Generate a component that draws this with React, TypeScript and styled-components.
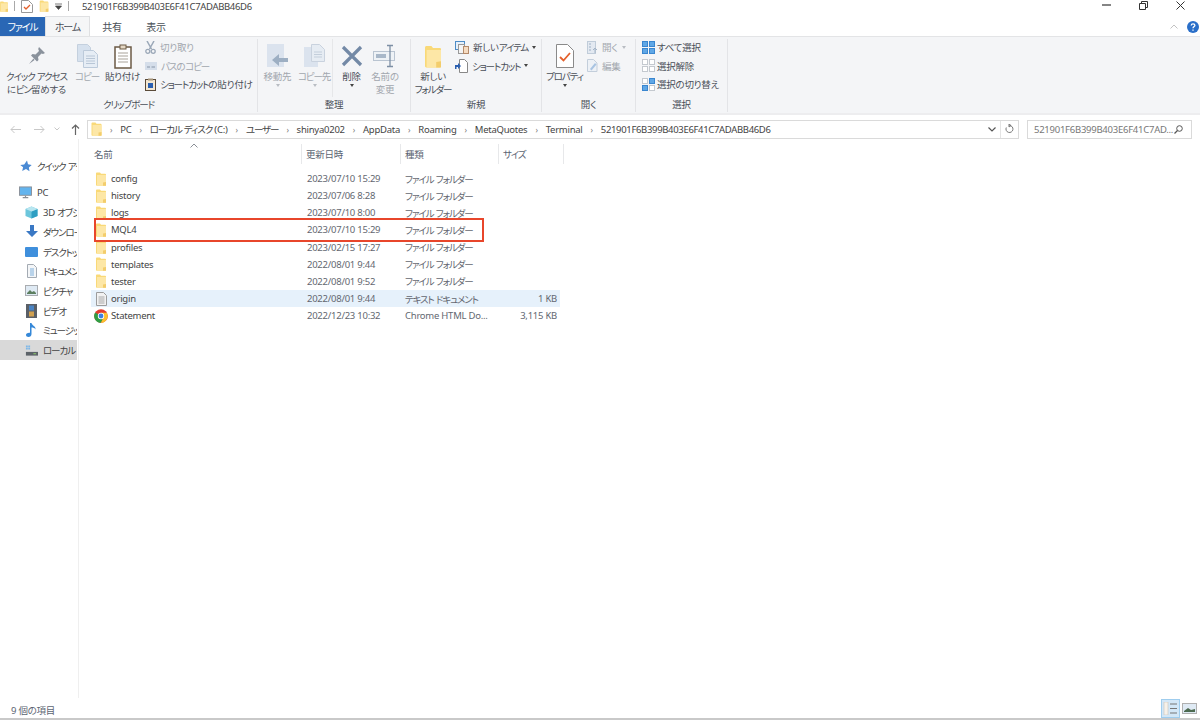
import type { ReactNode } from 'react';
import styled, { createGlobalStyle } from 'styled-components';

const GlobalStyle = createGlobalStyle`
  html, body {
    margin: 0;
    padding: 0;
    background: #fff;
  }
`;

const Window = styled.div`
  display: flex;
  flex-direction: column;
  position: relative;
  width: 1200px;
  height: 720px;
  overflow: hidden;
  background: #fff;
  color: #4a4f57;
  font-family: "Noto Sans", "Noto Sans CJK JP", sans-serif;
  font-size: 9.5px;
  font-feature-settings: "palt";
  letter-spacing: -0.25px;
`;

// katakana runs sit tighter than the rest of the text in this UI font
const KanaRun = styled.span`
  letter-spacing: -1.1px;
`;

function Jp({ children }: { children: string }) {
  const parts = children.split(/([ァ-ヶー]+)/);
  return (
    <>
      {parts.map((part, i) => (i % 2 === 1 ? <KanaRun key={i}>{part}</KanaRun> : part))}
    </>
  );
}

const TitleBar = styled.div`
  display: flex;
  align-items: center;
  height: 16px;
  flex: none;
`;

const TitleIcons = styled.div`
  display: flex;
  align-items: center;
  gap: 6px;
  width: 82px;
  flex: none;
  margin-top: -4px;
`;

const VBar = styled.span`
  width: 1px;
  height: 10px;
  background: #a9a9a9;
`;

const TitleText = styled.span`
  flex: 1;
  color: #454545;
  letter-spacing: -0.33px;
  margin-top: -4px;
`;

const WindowButtons = styled.div`
  display: flex;
  align-items: center;
  gap: 28px;
  padding-right: 15px;
  margin-top: -6px;
`;

const TabRow = styled.div`
  display: flex;
  align-items: flex-end;
  height: 20px;
  flex: none;
`;

const Tab = styled.div<{ $kind?: 'file' | 'active' }>`
  display: flex;
  align-items: center;
  justify-content: center;
  height: ${(p) => (p.$kind === 'active' ? '20px' : '19px')};
  width: ${(p) => (p.$kind ? '45px' : '44px')};
  background: ${(p) => (p.$kind === 'file' ? '#2a67b5' : p.$kind === 'active' ? '#f5f6f7' : 'transparent')};
  color: ${(p) => (p.$kind === 'file' ? '#fff' : '#4a4f57')};
  border: ${(p) => (p.$kind === 'active' ? '1px solid #dfe0e2' : 'none')};
  border-bottom: none;
  box-sizing: border-box;
  font-size: 10px;
`;

const TabRight = styled.div`
  display: flex;
  align-items: center;
  gap: 9px;
  margin-left: auto;
  padding-right: 1px;
  height: 19px;
`;

const Ribbon = styled.div`
  display: flex;
  height: 79px;
  flex: none;
  background: #f4f5f7;
  border-top: 1px solid #e3e4e6;
  border-bottom: 2px solid #ededef;
  box-sizing: border-box;
`;

const Group = styled.div<{ $w: number }>`
  display: flex;
  flex-direction: column;
  width: ${(p) => p.$w}px;
  flex: none;
  border-right: 1px solid #e3e4e7;
  margin: 2px 0 1px;
  box-sizing: border-box;
`;

const GroupBody = styled.div`
  display: flex;
  flex: 1;
  align-items: flex-start;
`;

const GroupLabel = styled.div`
  height: 14px;
  text-align: center;
  line-height: 14px;
`;

const BigButton = styled.div<{ $w: number; $off?: boolean; $divided?: boolean }>`
  display: flex;
  flex-direction: column;
  align-items: center;
  width: ${(p) => p.$w}px;
  flex: none;
  padding-top: 4px;
  line-height: 12.5px;
  text-align: center;
  color: ${(p) => (p.$off ? '#a2a7ae' : '#4a4f57')};
  white-space: nowrap;
  box-sizing: border-box;
  height: 58px;
  border-right: ${(p) => (p.$divided ? '1px solid #e6e7e9' : 'none')};
`;

const BigIcon = styled.div`
  display: flex;
  align-items: center;
  justify-content: center;
  height: 26px;
  margin-bottom: 2px;
`;

const Drop = styled.span<{ $off?: boolean }>`
  width: 0;
  height: 0;
  border-left: 2.5px solid transparent;
  border-right: 2.5px solid transparent;
  border-top: 3px solid ${(p) => (p.$off ? '#b9bdc3' : '#444')};
`;

const SmallColumn = styled.div<{ $left?: number }>`
  display: flex;
  flex-direction: column;
  margin-top: -1px;
  padding-left: ${(p) => p.$left ?? 0}px;
  flex: none;
`;

const SmallButton = styled.div<{ $off?: boolean }>`
  display: flex;
  align-items: center;
  gap: 4px;
  height: 18.5px;
  color: ${(p) => (p.$off ? '#a2a7ae' : '#4a4f57')};
  white-space: nowrap;
`;

const AddressRow = styled.div`
  display: flex;
  align-items: center;
  height: 20px;
  flex: none;
  margin-top: 4px;
  padding-left: 3px;
`;

const NavButton = styled.div<{ $w: number }>`
  display: flex;
  align-items: center;
  justify-content: center;
  width: ${(p) => p.$w}px;
  flex: none;
`;

const AddressBox = styled.div`
  display: flex;
  align-items: center;
  width: 932px;
  height: 19px;
  border: 1px solid #dadada;
  box-sizing: border-box;
  flex: none;
`;

const Crumbs = styled.div`
  display: flex;
  align-items: center;
  flex: 1;
  padding-left: 3px;
  gap: 8px;
  color: #444;
  white-space: nowrap;
`;

const CrumbLabel = styled.span`
  &:last-child {
    letter-spacing: -0.33px;
  }
`;

const Chevron = styled.span`
  color: #777;
  font-size: 8px;
`;

const DropChevron = styled.svg`
  margin-right: 4px;
`;

const AddressEnd = styled.div`
  display: flex;
  align-items: center;
  justify-content: center;
  width: 17px;
  height: 100%;
  border-left: 1px solid #e4e4e4;
`;

const SearchBox = styled.div`
  display: flex;
  align-items: center;
  justify-content: space-between;
  width: 165px;
  height: 19px;
  margin-left: 8px;
  padding: 0 8px 0 6px;
  border: 1px solid #dadada;
  box-sizing: border-box;
  color: #777;
  flex: none;
`;

const Main = styled.div`
  display: flex;
  flex: 1;
  min-height: 0;
`;

const Sidebar = styled.div`
  width: 79px;
  flex: none;
  padding-top: 17px;
  border-right: 1px solid #efefef;
  box-sizing: border-box;
  overflow: hidden;
`;

const SideItem = styled.div<{ $depth?: boolean; $selected?: boolean; $gapBelow?: number }>`
  display: flex;
  align-items: center;
  gap: 5px;
  height: 19.7px;
  width: 77px;
  padding-left: ${(p) => (p.$depth ? '25px' : '19px')};
  margin-bottom: ${(p) => p.$gapBelow ?? 0}px;
  box-sizing: border-box;
  background: ${(p) => (p.$selected ? '#d9d9d9' : 'transparent')};
  color: #444;
  white-space: nowrap;
  overflow: hidden;
`;

const SideIcon = styled.span`
  display: flex;
  flex: none;
  justify-content: center;
  width: 13px;
`;

const SideLabel = styled.span`
  white-space: nowrap;
`;

const ListPane = styled.div`
  flex: 1;
  padding-left: 12px;
  min-width: 0;
`;

const HeaderRow = styled.div`
  display: flex;
  position: relative;
  align-items: center;
  height: 20px;
  margin-top: 5px;
  margin-bottom: 6px;
  color: #5b6472;
`;

const SortCaret = styled.svg`
  position: absolute;
  left: 99px;
  top: -1px;
`;

const HeaderCell = styled.div<{ $w: number }>`
  width: ${(p) => p.$w}px;
  flex: none;
  height: 100%;
  display: flex;
  align-items: center;
  padding-left: 4px;
  box-sizing: border-box;
  border-right: 1px solid #e7e8ea;

  &:first-of-type {
    padding-left: 3px;
  }
`;

const FileRows = styled.div`
  display: flex;
  flex-direction: column;
  width: 469px;
`;

const FileRow = styled.div<{ $hover?: boolean }>`
  display: flex;
  align-items: center;
  height: 17.15px;
  background: ${(p) => (p.$hover ? '#e6f1fb' : 'transparent')};
  white-space: nowrap;
`;

const NameCell = styled.div`
  display: flex;
  align-items: center;
  gap: 3px;
  width: 216px;
  flex: none;
  padding-left: 3px;
  box-sizing: border-box;
  color: #444;
`;

const FileIcon = styled.span`
  display: flex;
  justify-content: center;
  width: 14px;
  flex: none;
`;

const DateCell = styled.div`
  width: 98px;
  flex: none;
  color: #636770;
`;

const TypeCell = styled.div`
  width: 97px;
  flex: none;
  color: #636770;
`;

const SizeCell = styled.div`
  flex: 1;
  text-align: right;
  padding-right: 3px;
  color: #636770;
`;

const Highlight = styled.div`
  position: absolute;
  left: 94px;
  top: 218px;
  width: 390px;
  height: 24px;
  border: 2.5px solid #e8462b;
  box-sizing: border-box;
  pointer-events: none;
`;

const StatusBar = styled.div`
  display: flex;
  align-items: center;
  justify-content: space-between;
  height: 20px;
  flex: none;
  padding: 0 3px 0 11px;
  border-bottom: 2px solid #c9c9c9;
  color: #5b6472;
`;

const StatusText = styled.span`
  padding-top: 3px;
`;

const ViewToggle = styled.div`
  display: flex;
  align-items: center;
  gap: 1px;
  height: 100%;
`;

const ViewButton = styled.div<{ $on?: boolean }>`
  display: flex;
  align-items: center;
  justify-content: center;
  width: ${(p) => (p.$on ? '19px' : '16px')};
  height: 19px;
  box-sizing: border-box;
  background: ${(p) => (p.$on ? '#d3e7f7' : 'transparent')};
  border: ${(p) => (p.$on ? '1px solid #9fcdee' : 'none')};
`;

const GridSvg = styled.svg`
  margin-right: -2px;
`;

function Folder({ w = 10, h = 14 }: { w?: number; h?: number }) {
  return (
    <svg width={w} height={h} viewBox="0 0 10 14">
      <path d="M0 1.500C0 .8.4.5 1 .5h3l1 1.200h4.200c.5 0 .8.300.8.800V13c0 .5-.3.800-.8.800H.8C.3 13.800 0 13.500 0 13z" fill="#f9d978" />
      <path d="M1 3h9v10c0 .5-.3.800-.8.800H1z" fill="#fde7a6" />
      <path d="M7 10.500 10 10v3.800H7z" fill="#f3cd6c" />
    </svg>
  );
}

function DocIcon() {
  return (
    <svg width="11" height="14" viewBox="0 0 11 14">
      <path d="M.5.500h7l3 3v10H.5z" fill="#f2f2f2" stroke="#9c9c9c" />
      <path d="M2.500 5h6M2.500 7h6M2.500 9h6M2.500 11h6" stroke="#a8a8a8" />
    </svg>
  );
}

function ChromeIcon() {
  return (
    <svg width="14" height="14" viewBox="0 0 14 14">
      <circle cx="7" cy="7" r="6.800" fill="#e33b2e" />
      <path d="M7 7 1.100 3.600A6.800 6.800 0 0 0 7 13.800L10 7z" fill="#2f9e44" />
      <path d="M7 3.800h5.900A6.800 6.800 0 0 1 7 13.800L10 7z" fill="#fbc02d" />
      <circle cx="7" cy="7" r="3.200" fill="#fff" />
      <circle cx="7" cy="7" r="2.400" fill="#3d7fe0" />
    </svg>
  );
}

function PinIcon() {
  return (
    <svg width="18" height="20" viewBox="0 0 18 20">
      <path d="M11 1l6 6-2 1-1.500-.5L10 11l.5 3-1.500 1.500-6-6L4.500 8l3 .5L11 5l-.8-2z" fill="#8a929c" />
      <path d="M5.500 12.500 1 18l5.500-4z" fill="#8a929c" />
    </svg>
  );
}

function CopyIcon() {
  return (
    <svg width="21" height="24" viewBox="0 0 21 24">
      <path d="M.5.500h10l3 3v14H.5z" fill="#d6e1ee" stroke="#c4d0de" />
      <path d="M6.500 6.500h10l4 4v13h-14z" fill="#e6edf5" stroke="#bccada" />
      <path d="M9 12h9M9 14.500h9M9 17h9M9 19.500h9" stroke="#b8c6d6" />
    </svg>
  );
}

function PasteIcon() {
  return (
    <svg width="18" height="25" viewBox="0 0 18 25">
      <rect x="1" y="3" width="16" height="21" fill="#fff" stroke="#6b5a45" strokeWidth="1.500" />
      <rect x="6" y="1" width="6" height="4" fill="#e4d7c4" stroke="#6b5a45" />
      <path d="M4 9h10M4 12h10M4 15h10M4 18h10" stroke="#a9a39a" />
    </svg>
  );
}

function ScissorsIcon() {
  return (
    <svg width="11" height="13" viewBox="0 0 11 13">
      <path d="M2 0l4.500 8M9 0 4.500 8" stroke="#9ba8b8" strokeWidth="1.500" fill="none" />
      <circle cx="2.800" cy="10.300" r="2" fill="none" stroke="#9ba8b8" strokeWidth="1.300" />
      <circle cx="8.200" cy="10.300" r="2" fill="none" stroke="#9ba8b8" strokeWidth="1.300" />
    </svg>
  );
}

function PathIcon() {
  return (
    <svg width="12" height="8" viewBox="0 0 12 8">
      <rect width="12" height="8" fill="#d5deea" />
      <path d="M2 5h3M6.500 5h3.500" stroke="#8896a8" />
    </svg>
  );
}

function ShortcutPasteIcon() {
  return (
    <svg width="11" height="13" viewBox="0 0 11 13">
      <rect x=".500" y="1.500" width="10" height="11" fill="#f3e7d2" stroke="#5a4a38" />
      <rect x="3" y=".500" width="5" height="2" fill="#a69478" />
      <rect x="3" y="5" width="5" height="5" fill="#2a5fb0" />
    </svg>
  );
}

function MoveIcon({ copy }: { copy?: boolean }) {
  return (
    <svg width="22" height="24" viewBox="0 0 22 24">
      {copy ? (
        <>
          <rect y="3" width="14" height="20" fill="#dbe3ee" />
          <path d="M7.500.500h8l5 5v12h-13z" fill="#e6ecf3" stroke="#c9d2de" />
          <path d="M10 8h8M10 10.500h8M10 13h8" stroke="#c3cedb" />
        </>
      ) : (
        <>
          <rect width="17" height="23" fill="#dbe3ee" />
          <path d="M21 14h-9v-4l-7 6 7 6v-4h9z" fill="#9dafc3" />
        </>
      )}
    </svg>
  );
}

function DeleteIcon() {
  return (
    <svg width="22" height="22" viewBox="0 0 22 22">
      <path d="M2 2l18 18M20 2 2 20" stroke="#7389a6" strokeWidth="3.200" />
    </svg>
  );
}

function RenameIcon() {
  return (
    <svg width="24" height="24" viewBox="0 0 24 24">
      <rect x=".500" y="7.500" width="21" height="9" fill="#eef2f6" stroke="#b9c4d1" />
      <rect x="3" y="10" width="10" height="4" fill="#a9b8c9" />
      <path d="M14 1.500h6M14 22.500h6M17 1.500v21" stroke="#7d8fa5" strokeWidth="1.300" fill="none" />
    </svg>
  );
}

function NewItemIcon() {
  return (
    <svg width="14" height="13" viewBox="0 0 14 13">
      <rect x=".500" y=".500" width="9" height="8" fill="#e6f0fa" stroke="#4d8cc7" />
      <rect x="3.500" y="3.500" width="6" height="9" fill="#f4f4f4" stroke="#999" />
      <rect x="8.500" y="5.500" width="5" height="7" fill="#f6dcc2" stroke="#b48a6a" />
    </svg>
  );
}

function ShortcutIcon() {
  return (
    <svg width="13" height="14" viewBox="0 0 13 14">
      <path d="M4.500.500h5l3 3v10h-8z" fill="#fff" stroke="#888" />
      <path d="M0 6h3V4l3 3-3 3V8H1.500v2H0z" fill="#2a5fb0" />
    </svg>
  );
}

function PropertiesIcon() {
  return (
    <svg width="18" height="24" viewBox="0 0 18 24">
      <path d="M.500.500h11l6 6v17H.500z" fill="#fff" stroke="#8a8a8a" />
      <path d="M4 13l3.500 3.500L14 9" fill="none" stroke="#e4602c" strokeWidth="1.800" />
    </svg>
  );
}

function OpenIcon() {
  return (
    <svg width="11" height="13" viewBox="0 0 11 13">
      <rect x=".500" y=".500" width="8" height="12" fill="#e3e9f1" stroke="#c0ccd9" />
      <path d="M2 3h2M2 6h2M2 9h2" stroke="#9db0c5" />
      <path d="M8 12V7M6 9l2-2 2 2" fill="none" stroke="#a5b5c8" />
    </svg>
  );
}

function EditIcon() {
  return (
    <svg width="11" height="13" viewBox="0 0 11 13">
      <path d="M.500.500h6l3.500 3.500v8.500H.500z" fill="#edf1f6" stroke="#c3cedb" />
      <path d="M3 10l5-6 1.500 1.500-5 6z" fill="#a9c4e2" />
    </svg>
  );
}

function SelectGrid({ mode }: { mode: 'all' | 'none' | 'invert' }) {
  const on = (i: number) => mode === 'all' || (mode === 'invert' && (i === 1 || i === 2));
  return (
    <GridSvg width="13" height="13" viewBox="0 0 13 13">
      {[0, 1, 2, 3].map((i) => (
        <rect
          key={i}
          x={(i % 2) * 7 + 0.5}
          y={Math.floor(i / 2) * 7 + 0.5}
          width="5"
          height="5"
          fill={on(i) ? '#5fa7e6' : '#fff'}
          stroke={on(i) ? '#3a86cf' : '#c4c9cf'}
        />
      ))}
    </GridSvg>
  );
}

function StarIcon() {
  return (
    <svg width="12" height="12" viewBox="0 0 12 12">
      <path d="M7 .5l1 3.800 3.700.6-2.800 2.500.6 3.900L6 9l-3.800 2 .9-3.700L.3 4.900l3.900-.3z" fill="#4a8ad4" />
    </svg>
  );
}

function PcIcon() {
  return (
    <svg width="14" height="13" viewBox="0 0 14 13">
      <rect x=".500" y=".500" width="13" height="9" fill="#63b4ee" stroke="#8a8f96" />
      <path d="M4 12h6M7 10v2" stroke="#8a8f96" strokeWidth="1.300" />
    </svg>
  );
}

function CubeIcon() {
  return (
    <svg width="13" height="13" viewBox="0 0 13 13">
      <path d="M6.500.500 12.500 3v7l-6 2.500-6-2.500V3z" fill="#6cc6dc" />
      <path d="M6.500 5.500 12.500 3v7l-6 2.500z" fill="#2e9ec2" />
      <path d="M6.500.500 12.500 3l-6 2.500L.5 3z" fill="#b8e6f0" />
    </svg>
  );
}

function DownloadIcon() {
  return (
    <svg width="12" height="13" viewBox="0 0 12 13">
      <path d="M4 0h4v6h4l-6 6-6-6h4z" fill="#3a78c4" />
    </svg>
  );
}

function DesktopIcon() {
  return (
    <svg width="13" height="10" viewBox="0 0 13 10">
      <rect width="13" height="10" rx="1" fill="#3f8fdc" />
    </svg>
  );
}

function DocumentsIcon() {
  return (
    <svg width="10" height="14" viewBox="0 0 10 14">
      <path d="M.500.500h6l3 3v10h-9z" fill="#f4f6f8" stroke="#a4abb3" />
      <path d="M3 5h4M3 7h4M3 9h4M3 11h4" stroke="#7fb0dc" />
    </svg>
  );
}

function PictureIcon() {
  return (
    <svg width="13" height="11" viewBox="0 0 13 11">
      <rect x=".500" y=".500" width="12" height="10" fill="#dfeaf4" stroke="#a9acb0" />
      <path d="M2 8l3-3 2 2 2-1 2 2v1H2z" fill="#5d7f60" />
    </svg>
  );
}

function VideoIcon() {
  return (
    <svg width="11" height="14" viewBox="0 0 11 14">
      <rect width="11" height="14" fill="#5a5f66" />
      <rect x="3" y="1.500" width="5" height="5" fill="#4a84c4" />
      <rect x="3" y="7.500" width="5" height="5" fill="#d0a050" />
    </svg>
  );
}

function MusicIcon() {
  return (
    <svg width="11" height="14" viewBox="0 0 11 14">
      <path d="M4 0h1.500c.3 2.500 4.500 3 4 6.500C9 5 7 4.500 5.500 4.500V11c0 1.700-1.300 3-3 3C1 14 0 13.200 0 12c0-1.400 1.400-2.400 4-2.200z" fill="#3588d8" />
    </svg>
  );
}

function DriveIcon() {
  return (
    <svg width="14" height="13" viewBox="0 0 14 13">
      <path d="M1 1h2v2H1zM3.500 1h2v2h-2zM1 3.500h2v2H1zM3.500 3.500h2v2h-2z" fill="#7db7e8" />
      <rect x="1" y="8" width="13" height="4" fill="#5c6268" />
      <rect x="9" y="9.500" width="3" height="1" fill="#8fd06a" />
    </svg>
  );
}

function ListViewIcon() {
  return (
    <svg width="15" height="13" viewBox="0 0 15 13">
      <rect x="1" y="0" width="4" height="13" fill="#f6f1ea" stroke="#c9c2b8" strokeWidth=".6" />
      <path d="M7 2h7M7 6.500h7M7 11h7" stroke="#777" strokeWidth="1.200" />
    </svg>
  );
}

function ThumbViewIcon() {
  return (
    <svg width="15" height="11" viewBox="0 0 15 11">
      <rect x=".500" y=".500" width="14" height="10" fill="#dfeaf4" stroke="#b0b0b0" />
      <path d="M2 8l4-3 3 2 4-1v3H2z" fill="#4c6a50" />
    </svg>
  );
}

const fileIcons: Record<string, ReactNode> = {
  folder: <Folder />,
  doc: <DocIcon />,
  chrome: <ChromeIcon />,
};

const items = [
  { name: 'config', date: '2023/07/10 15:29', type: 'ファイル フォルダー', icon: 'folder' },
  { name: 'history', date: '2023/07/06 8:28', type: 'ファイル フォルダー', icon: 'folder' },
  { name: 'logs', date: '2023/07/10 8:00', type: 'ファイル フォルダー', icon: 'folder' },
  { name: 'MQL4', date: '2023/07/10 15:29', type: 'ファイル フォルダー', icon: 'folder' },
  { name: 'profiles', date: '2023/02/15 17:27', type: 'ファイル フォルダー', icon: 'folder' },
  { name: 'templates', date: '2022/08/01 9:44', type: 'ファイル フォルダー', icon: 'folder' },
  { name: 'tester', date: '2022/08/01 9:52', type: 'ファイル フォルダー', icon: 'folder' },
  { name: 'origin', date: '2022/08/01 9:44', type: 'テキスト ドキュメント', size: '1 KB', icon: 'doc' },
  { name: 'Statement', date: '2022/12/23 10:32', type: 'Chrome HTML Do...', size: '3,115 KB', icon: 'chrome' },
];

const crumbs = ['PC', 'ローカル ディスク (C:)', 'ユーザー', 'shinya0202', 'AppData', 'Roaming', 'MetaQuotes', 'Terminal', '521901F6B399B403E6F41C7ADABB46D6'];

const places = [
  { label: '3D オブジェクト', icon: <CubeIcon /> },
  { label: 'ダウンロード', icon: <DownloadIcon /> },
  { label: 'デスクトップ', icon: <DesktopIcon /> },
  { label: 'ドキュメント', icon: <DocumentsIcon /> },
  { label: 'ピクチャ', icon: <PictureIcon /> },
  { label: 'ビデオ', icon: <VideoIcon /> },
  { label: 'ミュージック', icon: <MusicIcon /> },
];

function Crumb({ label, last }: { label: string; last: boolean }) {
  return (
    <>
      <CrumbLabel><Jp>{label}</Jp></CrumbLabel>
      {!last && <Chevron>›</Chevron>}
    </>
  );
}

export default function App() {
  return (
    <Window>
      <GlobalStyle />
      <TitleBar>
        <TitleIcons>
          <Folder w={8} h={11} />
          <VBar />
          <svg width="12" height="13" viewBox="0 0 12 13">
            <path d="M.500.500h7l4 4v8h-11z" fill="#fff" stroke="#999" />
            <path d="M3 7l2 2 4-4" fill="none" stroke="#e4602c" strokeWidth="1.300" />
          </svg>
          <Folder w={10} h={12} />
          <svg width="7" height="7" viewBox="0 0 7 7">
            <path d="M0 1h7M.5 3h6L3.500 6.500z" fill="#444" stroke="#444" strokeWidth=".7" />
          </svg>
          <VBar />
        </TitleIcons>
        <TitleText>521901F6B399B403E6F41C7ADABB46D6</TitleText>
        <WindowButtons>
          <svg width="9" height="2" viewBox="0 0 9 2"><path d="M0 1h9" stroke="#333" strokeWidth="1.200" /></svg>
          <svg width="9" height="9" viewBox="0 0 9 9"><path d="M.5 2.500h6v6h-6zM2.500 2.500v-2h6v6h-2" fill="none" stroke="#333" /></svg>
          <svg width="9" height="9" viewBox="0 0 9 9"><path d="M.5.5l8 8M8.500.5l-8 8" stroke="#333" /></svg>
        </WindowButtons>
      </TitleBar>
      <TabRow>
        <Tab $kind="file"><Jp>ファイル</Jp></Tab>
        <Tab $kind="active"><Jp>ホーム</Jp></Tab>
        <Tab>共有</Tab>
        <Tab>表示</Tab>
        <TabRight>
          <svg width="8" height="5" viewBox="0 0 8 5"><path d="M.5 4.500 4 1l3.500 3.500" fill="none" stroke="#c2c2c2" /></svg>
          <svg width="12" height="12" viewBox="0 0 12 12">
            <circle cx="6" cy="6" r="6" fill="#2a6fc9" />
            <path d="M4.200 4.500C4.300 3.400 5 2.800 6 2.800s1.900.6 1.900 1.600S6 5.800 6 7.200M6 8.500v1.200" fill="none" stroke="#fff" strokeWidth="1.300" />
          </svg>
        </TabRight>
      </TabRow>
      <Ribbon>
        <Group $w={258}>
          <GroupBody>
            <BigButton $w={73}><BigIcon><PinIcon /></BigIcon><span><Jp>クイック アクセス</Jp></span><span><Jp>にピン留めする</Jp></span></BigButton>
            <BigButton $w={28} $off><BigIcon><CopyIcon /></BigIcon><span><Jp>コピー</Jp></span></BigButton>
            <BigButton $w={43}><BigIcon><PasteIcon /></BigIcon>貼り付け</BigButton>
            <SmallColumn $left={1}>
              <SmallButton $off><ScissorsIcon />切り取り</SmallButton>
              <SmallButton $off><PathIcon /><span><Jp>パスのコピー</Jp></span></SmallButton>
              <SmallButton><ShortcutPasteIcon /><span><Jp>ショートカットの貼り付け</Jp></span></SmallButton>
            </SmallColumn>
          </GroupBody>
          <GroupLabel><Jp>クリップボード</Jp></GroupLabel>
        </Group>
        <Group $w={153}>
          <GroupBody>
            <BigButton $w={39} $off><BigIcon><MoveIcon /></BigIcon>移動先<Drop $off /></BigButton>
            <BigButton $w={36} $off $divided><BigIcon><MoveIcon copy /></BigIcon><span><Jp>コピー先</Jp></span><Drop $off /></BigButton>
            <BigButton $w={37}><BigIcon><DeleteIcon /></BigIcon>削除<Drop /></BigButton>
            <BigButton $w={30} $off><BigIcon><RenameIcon /></BigIcon>名前の<br />変更</BigButton>
          </GroupBody>
          <GroupLabel>整理</GroupLabel>
        </Group>
        <Group $w={131}>
          <GroupBody>
            <BigButton $w={44}><BigIcon><Folder w={16} h={23} /></BigIcon>新しい<span><Jp>フォルダー</Jp></span></BigButton>
            <SmallColumn>
              <SmallButton><NewItemIcon /><span><Jp>新しいアイテム</Jp></span><Drop /></SmallButton>
              <SmallButton><ShortcutIcon /><span><Jp>ショートカット</Jp></span><Drop /></SmallButton>
            </SmallColumn>
          </GroupBody>
          <GroupLabel>新規</GroupLabel>
        </Group>
        <Group $w={94}>
          <GroupBody>
            <BigButton $w={45}><BigIcon><PropertiesIcon /></BigIcon><span><Jp>プロパティ</Jp></span><Drop /></BigButton>
            <SmallColumn>
              <SmallButton $off><OpenIcon />開く<Drop $off /></SmallButton>
              <SmallButton $off><EditIcon />編集</SmallButton>
            </SmallColumn>
          </GroupBody>
          <GroupLabel>開く</GroupLabel>
        </Group>
        <Group $w={92}>
          <GroupBody>
            <SmallColumn $left={6}>
              <SmallButton><SelectGrid mode="all" />すべて選択</SmallButton>
              <SmallButton><SelectGrid mode="none" />選択解除</SmallButton>
              <SmallButton><SelectGrid mode="invert" />選択の切り替え</SmallButton>
            </SmallColumn>
          </GroupBody>
          <GroupLabel>選択</GroupLabel>
        </Group>
      </Ribbon>
      <AddressRow>
        <NavButton $w={24}><svg width="11" height="9" viewBox="0 0 11 9"><path d="M11 4.500H1M4.500 1 1 4.500 4.500 8" fill="none" stroke="#c8c8c8" /></svg></NavButton>
        <NavButton $w={24}><svg width="11" height="9" viewBox="0 0 11 9"><path d="M0 4.500h10M6.500 1 10 4.500 6.500 8" fill="none" stroke="#c8c8c8" /></svg></NavButton>
        <NavButton $w={12}><svg width="6" height="4" viewBox="0 0 6 4"><path d="M.5.500 3 3 5.500.5" fill="none" stroke="#c8c8c8" /></svg></NavButton>
        <NavButton $w={24}><svg width="9" height="11" viewBox="0 0 9 11"><path d="M4.500 11V1M1 4.500 4.500 1 8 4.500" fill="none" stroke="#666" strokeWidth="1.200" /></svg></NavButton>
        <AddressBox>
          <Crumbs>
            <Folder w={11} h={14} />
            <Chevron>›</Chevron>
            {crumbs.map((c, i) => (
              <Crumb key={c} label={c} last={i === crumbs.length - 1} />
            ))}
          </Crumbs>
          <DropChevron width="8" height="5" viewBox="0 0 8 5"><path d="M.5.500 4 4 7.500.5" fill="none" stroke="#555" strokeWidth="1.200" /></DropChevron>
          <AddressEnd>
            <svg width="9" height="10" viewBox="0 0 9 10"><path d="M4.500 1.500a3.500 3.500 0 1 1-3.200 2M4 0v3l2-1.500z" fill="none" stroke="#777" /></svg>
          </AddressEnd>
        </AddressBox>
        <SearchBox>
          521901F6B399B403E6F41C7AD...
          <svg width="9" height="9" viewBox="0 0 9 9"><circle cx="5.500" cy="3.500" r="2.800" fill="none" stroke="#555" /><path d="M3.500 5.500 .5 8.500" stroke="#555" strokeWidth="1.300" /></svg>
        </SearchBox>
      </AddressRow>
      <Main>
        <Sidebar>
          <SideItem $gapBelow={7}><SideIcon><StarIcon /></SideIcon><SideLabel><Jp>クイック アクセス</Jp></SideLabel></SideItem>
          <SideItem><SideIcon><PcIcon /></SideIcon>PC</SideItem>
          {places.map((p) => (
            <SideItem $depth key={p.label}><SideIcon>{p.icon}</SideIcon><SideLabel><Jp>{p.label}</Jp></SideLabel></SideItem>
          ))}
          <SideItem $depth $selected><SideIcon><DriveIcon /></SideIcon><SideLabel><Jp>ローカル ディスク</Jp></SideLabel></SideItem>
        </Sidebar>
        <ListPane>
          <HeaderRow>
            <SortCaret width="8" height="5" viewBox="0 0 8 5"><path d="M.5 4.500 4 1l3.500 3.500" fill="none" stroke="#8a8f96" /></SortCaret>
            <HeaderCell $w={211}>名前</HeaderCell>
            <HeaderCell $w={99}>更新日時</HeaderCell>
            <HeaderCell $w={98}>種類</HeaderCell>
            <HeaderCell $w={65}><span><Jp>サイズ</Jp></span></HeaderCell>
          </HeaderRow>
          <FileRows>
            {items.map((f) => (
              <FileRow key={f.name} $hover={f.name === 'origin'}>
                <NameCell>
                  <FileIcon>{fileIcons[f.icon]}</FileIcon>
                  {f.name}
                </NameCell>
                <DateCell>{f.date}</DateCell>
                <TypeCell><Jp>{f.type}</Jp></TypeCell>
                <SizeCell>{f.size}</SizeCell>
              </FileRow>
            ))}
          </FileRows>
        </ListPane>
      </Main>
      <StatusBar>
        <StatusText>9 個の項目</StatusText>
        <ViewToggle>
          <ViewButton $on><ListViewIcon /></ViewButton>
          <ViewButton><ThumbViewIcon /></ViewButton>
        </ViewToggle>
      </StatusBar>
      <Highlight />
    </Window>
  );
}
